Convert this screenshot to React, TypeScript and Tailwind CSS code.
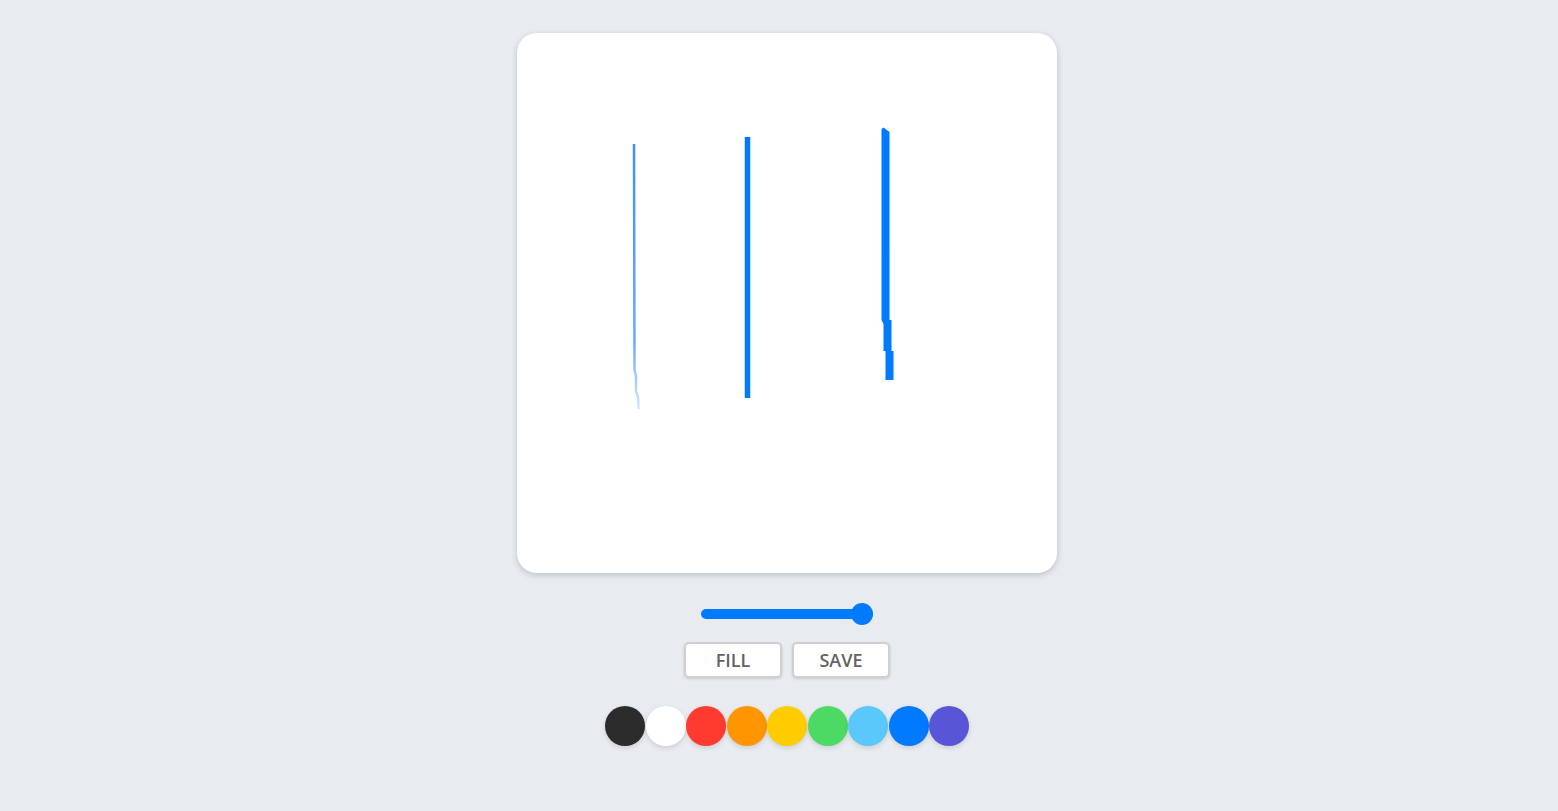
import React from "react";

const colors = ["#2c2c2c", "#ffffff", "#ff3b30", "#ff9500", "#ffcc00", "#4cd964", "#5ac8fa", "#007aff", "#5856d6"];

export default function App() {
  return (
    <div className="min-h-[811px] w-full bg-[#e8ebef] flex flex-col items-center pt-[33px] pl-[16px] font-['Open_Sans',sans-serif]">
      <div className="w-[540px] h-[540px] bg-white rounded-[20px] shadow-[0_2px_6px_rgba(0,0,0,0.18)] overflow-hidden">
        <svg width="540" height="540" viewBox="0 0 540 540">
          <defs>
            <linearGradient id="fade" x1="0" y1="0" x2="0" y2="1">
              <stop offset="0" stopColor="#3d8fff" />
              <stop offset="0.75" stopColor="#6aa9ff" />
              <stop offset="1" stopColor="#d6e8ff" />
            </linearGradient>
          </defs>
          <path d="M117 111 L117.5 337 L119 343 L119 358 L121 364 L121.5 376" stroke="url(#fade)" strokeWidth="2.5" fill="none" strokeLinejoin="round" />
          <line x1="230.5" y1="104" x2="230.5" y2="365" stroke="#007aff" strokeWidth="5.5" />
          <path d="M364.5 96 L366.5 94.5 L372.5 99 L372.5 287 L374.5 287 L374.5 318 L376.5 318 L376.5 347 L368.5 347 L368.5 318 L366.5 318 L366.5 291 L364.5 287 Z" fill="#007aff" />
        </svg>
      </div>
      <div className="mt-[30px] relative w-[172px] h-[22px] flex items-center">
        <div className="w-full h-[10px] rounded-full bg-[#007aff]" />
        <div className="absolute right-0 top-0 w-[22px] h-[22px] rounded-full bg-[#007aff]" />
      </div>
      <div className="mt-[17px] flex gap-[10px]">
        {["FILL", "SAVE"].map((t) => (
          <button key={t} className="w-[98px] h-[36px] bg-white border-2 border-[#d0d0d0] rounded-[5px] shadow-[0_1px_3px_rgba(0,0,0,0.15)] text-[18px] leading-none font-semibold text-[#636363]">
            {t}
          </button>
        ))}
      </div>
      <div className="mt-[28px] flex gap-[0.5px]">
        {colors.map((c) => (
          <div key={c} className="w-10 h-10 rounded-full shadow-[0_2px_5px_rgba(0,0,0,0.12)]" style={{ backgroundColor: c }} />
        ))}
      </div>
    </div>
  );
}
